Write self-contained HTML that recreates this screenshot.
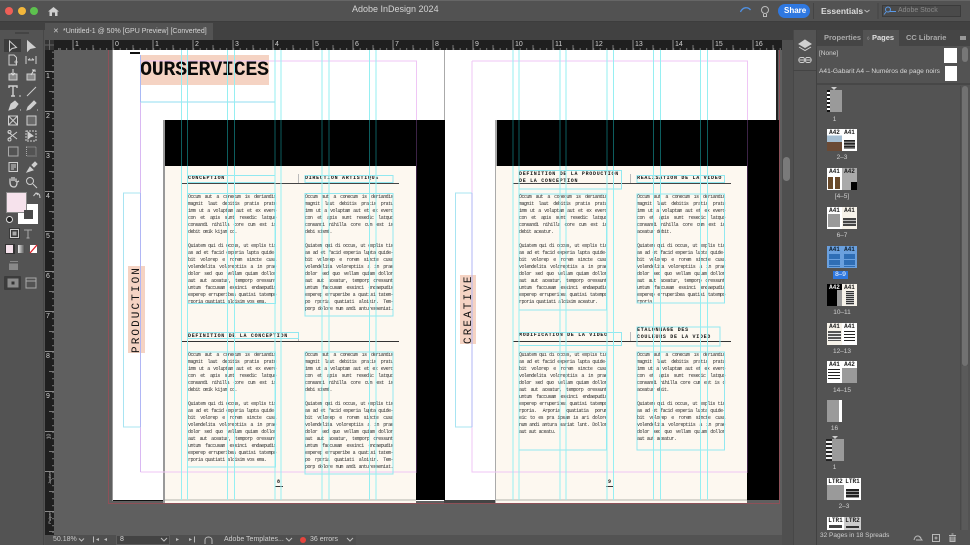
<!DOCTYPE html>
<html lang="en"><head><meta charset="utf-8"><title>Adobe InDesign 2024</title>
<style>
html,body{margin:0;padding:0;background:#5f5f5f}
#r{position:relative;width:970px;height:545px;overflow:hidden;background:#5f5f5f;font-family:"Liberation Sans",sans-serif;color:#ccc}
#r div{position:absolute;box-sizing:border-box}
#r svg{position:absolute;left:0;top:0}
.t{white-space:nowrap;line-height:1}
.b{font:5px/7px "Liberation Mono",monospace;letter-spacing:-.55px;color:#333;width:88px}
.b p{margin:0;white-space:pre-line;text-align:justify;text-align-last:justify}
.b p.s{text-align:left;text-align-last:left;white-space:nowrap}
.b p.g{height:7px}
.h{font:bold 5px/7px "Liberation Mono",monospace;letter-spacing:.7px;color:#151515;white-space:pre}
.p{background:#fff;overflow:hidden;font:bold 6px/7px "Liberation Mono",monospace;color:#222;text-align:center}
.l{font-size:6.5px;color:#cfcfcf;text-align:center;line-height:8px;white-space:nowrap}
.n{font-size:7px;color:#ddd;line-height:8px;white-space:nowrap}
.rt{font-size:7px;color:#d0d0d0;white-space:nowrap;line-height:1;top:41px}
.rl{font-size:7px;color:#d0d0d0;white-space:nowrap;line-height:1;left:46px}
</style></head><body><div id="r">

<!-- top bar -->
<div style="left:0;top:0;width:970px;height:22px;background:#525252;border-top:1px solid #666;border-bottom:1px solid #3d3d3d"></div>
<div style="left:5px;top:7px;width:8px;height:8px;border-radius:50%;background:#ee5f57"></div>
<div style="left:18px;top:7px;width:8px;height:8px;border-radius:50%;background:#f3b73b"></div>
<div style="left:30px;top:7px;width:8px;height:8px;border-radius:50%;background:#5dc14e"></div>
<div class="t" style="left:352px;top:5px;font-size:9px;color:#d4d4d4">Adobe InDesign 2024</div>
<div style="left:778px;top:4px;width:32px;height:14px;border-radius:7px;background:#2f78e0"></div>
<div class="t" style="left:784px;top:7px;font-size:8px;font-weight:bold;color:#fff">Share</div>
<div class="t" style="left:821px;top:7px;font-size:8.5px;font-weight:bold;color:#ddd">Essentials</div>
<div style="left:882px;top:5px;width:79px;height:12px;border:1px solid #3b3b3b;background:#4a4a4a"></div>
<div class="t" style="left:898px;top:7px;font-size:7px;color:#8a8a8a">Adobe Stock</div>

<!-- tab row -->
<div style="left:0;top:22px;width:793px;height:18px;background:#414141"></div>
<div style="left:45px;top:23px;width:168px;height:17px;background:#535353"></div>
<div class="t" style="left:53px;top:28px;font-size:7px;color:#ccc">✕</div>
<div class="t" style="left:63px;top:28px;font-size:7px;color:#d5d5d5">*Untitled-1 @ 50% [GPU Preview] [Converted]</div>

<!-- left toolbar -->
<div style="left:0;top:22px;width:45px;height:523px;background:#535353"></div>
<div style="left:0;top:22px;width:45px;height:8px;background:#414141"></div>
<div style="left:1px;top:30px;width:43px;height:515px;background:#535353;border-right:1px solid #474747"></div>
<div style="left:15px;top:32px;width:14px;height:2px;background:#444"></div>
<div style="left:4px;top:39px;width:17px;height:13px;background:#3c3c3c"></div>
<div style="left:4px;top:276px;width:17px;height:14px;background:#3c3c3c;border-radius:1px"></div>
<div style="left:9px;top:228px;width:11px;height:11px;background:#3a3a3a"></div>
<div style="left:5px;top:244px;width:10px;height:10px;background:#333"></div>
<div style="left:6px;top:192px;width:21px;height:21px;background:#f6e2ec;border:1px solid #888;z-index:2"></div>
<div style="left:18px;top:204px;width:20px;height:20px;background:#fff;z-index:1"></div>
<div style="left:24px;top:210px;width:9px;height:9px;background:#4a4a4a;z-index:2"></div>
<div style="left:6px;top:245px;width:7px;height:8px;background:#f6e2ec"></div>
<div style="left:18px;top:245px;width:7px;height:8px;background:linear-gradient(90deg,#eee,#444)"></div>
<div style="left:30px;top:245px;width:7px;height:8px;background:#fff"></div>

<!-- canvas / pages -->
<div style="left:112px;top:50px;width:332px;height:451px;background:#fff;border-left:1px solid #999"></div>
<div style="left:113px;top:500px;width:52px;height:1px;background:#111"></div>
<div style="left:444px;top:50px;width:1px;height:70px;background:#aaa"></div>
<div style="left:445px;top:50px;width:331px;height:70px;background:#fff"></div>
<div style="left:776px;top:50px;width:1.5px;height:70px;background:#222"></div>
<div style="left:445px;top:120px;width:51px;height:380px;background:#fff"></div>
<div style="left:444px;top:120px;width:1px;height:380px;background:#000"></div>
<div style="left:444px;top:500px;width:52px;height:3px;background:#444"></div>
<div style="left:164px;top:120px;width:280px;height:46px;background:#000"></div>
<div style="left:163px;top:120px;width:2px;height:384px;background:#999"></div>
<div style="left:165px;top:166px;width:251px;height:338px;background:#fdf8f0"></div>
<div style="left:416px;top:166px;width:28px;height:334px;background:#000"></div>
<div style="left:495px;top:120px;width:285px;height:46px;background:#000"></div>
<div style="left:495px;top:120px;width:1.5px;height:384px;background:#aaa"></div>
<div style="left:496px;top:166px;width:251px;height:338px;background:#fdf8f0"></div>
<div style="left:747px;top:166px;width:33px;height:334px;background:#000"></div>
<div style="left:165px;top:499px;width:251px;height:2px;background:#d8d6ce"></div>
<div style="left:496px;top:499px;width:251px;height:2px;background:#d8d6ce"></div>
<div style="left:108px;top:50px;width:672px;height:454px;border:1px solid #8e5058;border-top:0"></div>

<!-- pink bars & titles -->
<div style="left:140px;top:55px;width:129px;height:30px;background:#f5d3c3"></div>
<div class="t" style="left:140px;top:61px;font:bold 20px/20px 'Liberation Mono',monospace;letter-spacing:-.3px;color:#0a0a0a">OURSERVICES</div>
<div style="left:130px;top:52px;width:10px;height:2px;background:#111"></div>
<div style="left:128px;top:266px;width:17px;height:87px;background:#f5d3c3"></div>
<div class="t" style="left:94px;top:304px;width:87px;height:11px;text-align:center;transform:rotate(-90deg);font:11px/11px 'Liberation Mono',monospace;letter-spacing:2.1px;color:#111">PRODUCTION</div>
<div style="left:460px;top:275px;width:16px;height:69px;background:#f5d3c3"></div>
<div class="t" style="left:435px;top:304px;width:69px;height:11px;text-align:center;transform:rotate(-90deg);font:11px/11px 'Liberation Mono',monospace;letter-spacing:2.1px;color:#111">CREATIVE</div>

<!-- rules -->
<div style="left:181px;top:183px;width:218px;height:1px;background:#444"></div>
<div style="left:181px;top:341px;width:218px;height:1px;background:#333"></div>
<div style="left:513px;top:183px;width:218px;height:1px;background:#444"></div>
<div style="left:513px;top:341px;width:218px;height:1px;background:#333"></div>
<div style="left:298px;top:174px;width:1px;height:9px;background:#bbb"></div>
<div style="left:630px;top:174px;width:1px;height:9px;background:#bbb"></div>
<div style="left:298px;top:332px;width:1px;height:9px;background:#bbb"></div>
<div style="left:630px;top:332px;width:1px;height:9px;background:#bbb"></div>
<div style="left:275px;top:486px;width:8px;height:1px;background:#333"></div>
<div style="left:606px;top:486px;width:8px;height:1px;background:#333"></div>
<div class="h" style="left:277px;top:479px;letter-spacing:0">8</div>
<div class="h" style="left:608px;top:479px;letter-spacing:0">9</div>

<!-- headings -->
<div class="h" style="left:188px;top:175px">CONCEPTION</div>
<div class="h" style="left:305px;top:175px">DIRECTION ARTISTIQUE</div>
<div class="h" style="left:188px;top:333px">DEFINITION DE LA CONCEPTION</div>
<div class="h" style="left:519px;top:171px">DEFINITION DE LA PRODUCTION
DE LA CONCEPTION</div>
<div class="h" style="left:637px;top:175px">REALISATION DE LA VIDEO</div>
<div class="h" style="left:519px;top:332px">MODIFICATION DE LA VIDEO</div>
<div class="h" style="left:637px;top:327px">ETALONNAGE DES
COULEURS DE LA VIDEO</div>

<!-- body text -->
<div class="b" style="left:188px;top:194px"><p>Occum aut a conecum is deriandis
magnit laut debitis pratis pratu
imm ut a voluptam aut et ex evero
con et apis sunt resedic latquo
consandi nihilla core cum est is</p><p class="s">debit omik kijam co.</p><p class="g"></p><p>Quiatem qui di occus, ut explis tis
as ad et facid experia lupta quide-
bit volorep e rorem sincte cusa
volendelita voloreptiis a in prae
dolor sed quo vellam quiam dollor
aut aut aceatur, temporp oressunt
untum faccusam essinci endaepudis
experep erruperibea quatisi tatempo</p><p class="s">rporia quatiati aloisim vos ema.</p></div>
<div class="b" style="left:305px;top:194px"><p>Occum aut a conecum is deriandis
magnit laut debitis pratis pratu
imm ut a voluptam aut et ex evero
con et apis sunt resedic latquo
consandi nihilla core cum est is</p><p class="s">debi sismt.</p><p class="g"></p><p>Quiatem qui di occus, ut explis tis
as ad et facid experia lupta quide-
bit volorep e rorem sincte cusa
volendelita voloreptiis a in prae
dolor sed quo vellam quiam dollor
aut aut aceatur, temporp oressunt
untum faccusam essinci endaepudis
experep erruperibe a quatisi tatem-
po rporia quatiati aloinir. Tem-
porp dolore num andi anturesseniat.</p></div>
<div class="b" style="left:188px;top:352px"><p>Occum aut a conecum is deriandis
magnit laut debitis pratis pratu
imm ut a voluptam aut et ex evero
con et apis sunt resedic latquo
consandi nihilla core cum est is</p><p class="s">debit omik kijam co.</p><p class="g"></p><p>Quiatem qui di occus, ut explis tis
as ad et facid experia lupta quide-
bit volorep e rorem sincte cusa
volendelita voloreptiis a in prae
dolor sed quo vellam quiam dollor
aut aut aceatur, temporp oressunt
untum faccusam essinci endaepudis
experep erruperibea quatisi tatempo</p><p class="s">rporia quatiati aloisim vos ema.</p></div>
<div class="b" style="left:305px;top:352px"><p>Occum aut a conecum is deriandis
magnit laut debitis pratis pratu
imm ut a voluptam aut et ex evero
con et apis sunt resedic latquo
consandi nihilla core cum est is</p><p class="s">debi sismt.</p><p class="g"></p><p>Quiatem qui di occus, ut explis tis
as ad et facid experia lupta quide-
bit volorep e rorem sincte cusa
volendelita voloreptiis a in prae
dolor sed quo vellam quiam dollor
aut aut aceatur, temporp oressunt
untum faccusam essinci endaepudis
experep erruperibe a quatisi tatem-
po rporia quatiati aloinir. Tem-
porp dolore num andi anturesseniat.</p></div>
<div class="b" style="left:519px;top:194px"><p>Occum aut a conecum is deriandis
magnit laut debitis pratis pratu
imm ut a voluptam aut et ex evero
con et apis sunt resedic latquo
consandi nihilla core cum est is</p><p class="s">debit aceatur.</p><p class="g"></p><p>Quiatem qui di occus, ut explis tis
as ad et facid experia lupta quide-
bit volorep e rorem sincte cusa
volendelita voloreptiis a in prae
dolor sed quo vellam quiam dollor
aut aut aceatur, temporp oressunt
untum faccusam essinci endaepudis
experep erruperibea quatisi tatempo</p><p class="s">rporia quatiati aloisim aceatur.</p></div>
<div class="b" style="left:637px;top:194px"><p>Occum aut a conecum is deriandis
magnit laut debitis pratis pratu
imm ut a voluptam aut et ex evero
con et apis sunt resedic latquo
consandi nihilla core cum est is</p><p class="s">aceatur debit.</p><p class="g"></p><p>Quiatem qui di occus, ut explis tis
as ad et facid experia lupta quide-
bit volorep e rorem sincte cusa
volendelita voloreptiis a in prae
dolor sed quo vellam quiam dollor
aut aut aceatur, temporp oressunt
untum faccusam essinci endaepudis
experep erruperibea quatisi tatempo</p><p class="s">rporia.</p></div>
<div class="b" style="left:519px;top:352px"><p>Quiatem qui di occus, ut explis tis
as ad et facid experia lupta quide-
bit volorep e rorem sincte cusa
volendelita voloreptiis a in prae
dolor sed quo vellam quiam dollor
aut aut aceatur, temporp oressunt
untum faccusam essinci endaepudis
experep erruperibea quatisi tatempo
rporia. Arporia quatiatia porum
eic to es pra ipsam is ari dolore
num andi antura sariat lunt. Dollor</p><p class="s">aut aut aceatu.</p></div>
<div class="b" style="left:637px;top:352px"><p>Occum aut a conecum is deriandis
magnit laut debitis pratis pratu
imm ut a voluptam aut et ex evero
con et apis sunt resedic latquo
consandi nihilla core cum est is d</p><p class="s">aceatur ebit.</p><p class="g"></p><p>Quiatem qui di occus, ut explis tis
as ad et facid experia lupta quide-
bit volorep e rorem sincte cusa
volendelita voloreptiis a in prae
dolor sed quo vellam quiam dollor</p><p class="s">aut aut aceatur.</p></div>

<!-- guides overlay -->
<svg width="970" height="545" viewBox="0 0 970 545" fill="none">
<g stroke="#efc6f5" stroke-width="1">
<path d="M140.500 61H416.500V120M140.500 61V85M140.500 472H416.500M472 61V193M472 61H747.500V120M472 427V472H747.500"/>
<path d="M140.500 85V193" stroke="#d9b8f2"/>
<path d="M140.500 353V472" stroke="#d9b8f2"/>
</g>
<path d="M416.500 120V472M747.500 120V472" stroke="#3c2346"/>
<path d="M140.500 55V102" stroke="#a9b9f5"/>
<path d="M140.500 102H275V55" stroke="#92def0"/>
<path d="M140.500 193H123.500V427H140.500M472 193H455.500V427H472" stroke="#a8e4f2"/>
<path d="M140.500 193V427M472 193V427" stroke="#b0b6f5"/>
<g stroke="#92e8f0" stroke-width="1">
<path d="M187.500 175.500H275V182.500H187.500ZM305 175.500H393V182.500H305Z"/>
<path d="M187.500 193.500H275.500V303.500H187.500ZM305 193.500H393V316H305Z"/>
<path d="M187.500 332.500H298.500V338.500H187.500ZM187.500 352H275.500V467H187.500ZM305 352H393V474H305Z"/>
<path d="M519 170.500H621.500V189H519ZM637 175.500H724.500V182.500H637Z"/>
<path d="M519 194H606.500V310H519ZM637 194H724.500V303H637Z"/>
<path d="M519 332.500H621.500V345.500H519ZM637 327H720V346H637Z"/>
<path d="M519 352H606.500V450H519ZM637 352H724.500V450H637Z"/>
</g>
<g stroke="#96eff2" stroke-width="1">
<path d="M181.500 50V120M181.500 166V500M187.500 50V120M187.500 166V500M227.500 50V120M227.500 166V500M234.500 50V120M234.500 166V500M275 50V120M275 166V500M281 50V120M281 166V500M322 50V120M322 166V500M329 50V120M329 166V500M369.500 50V120M369.500 166V500M376 50V120M376 166V500"/>
<path d="M513 50V120M513 166V500M519 50V120M519 166V500M560 50V120M560 166V500M566 50V120M566 166V500M607 50V120M607 166V500M613.500 50V120M613.500 166V500M653.500 50V120M653.500 166V500M660.500 50V120M660.500 166V500M700.500 50V120M700.500 166V500M707.500 50V120M707.500 166V500"/>
</g>
<g stroke="#0d5d5e" stroke-width="1">
<path d="M181.500 120V166M187.500 120V166M227.500 120V166M234.500 120V166M275 120V166M281 120V166M322 120V166M329 120V166M369.500 120V166M376 120V166M513 120V166M519 120V166M560 120V166M566 120V166M607 120V166M613.500 120V166M653.500 120V166M660.500 120V166M700.500 120V166M707.500 120V166"/>
</g>
</svg>

<!-- rulers -->
<div style="left:45px;top:40px;width:737px;height:10px;background:#1f1f1f"></div>
<div style="left:54px;top:48px;width:728px;height:2px;background:repeating-linear-gradient(90deg,#777 0 1px,transparent 1px 6.667px);background-position:5.700px 0"></div>
<div style="left:45px;top:40px;width:9px;height:505px;background:#1f1f1f"></div>
<div style="left:52px;top:50px;width:2px;height:485px;background:repeating-linear-gradient(180deg,#777 0 1px,transparent 1px 6.667px);background-position:0 1.700px"></div>
<div style="left:45px;top:40px;width:9px;height:10px;background:#333"></div>
<svg width="970" height="545" viewBox="0 0 970 545" fill="none">
<path d="M49.500 40V50M45 45H54" stroke="#666"/>
<path d="M73 40V50M113 40V50M153 40V50M193 40V50M233 40V50M273 40V50M313 40V50M353 40V50M393 40V50M433 40V50M473 40V50M513 40V50M553 40V50M593 40V50M633 40V50M673 40V50M713 40V50M753 40V50" stroke="#8a8a8a"/>
<path d="M93 45V50M133 45V50M173 45V50M213 45V50M253 45V50M293 45V50M333 45V50M373 45V50M413 45V50M453 45V50M493 45V50M533 45V50M573 45V50M613 45V50M653 45V50M693 45V50M733 45V50M773 45V50" stroke="#777"/>
<path d="M45 71.500H54M45 111.500H54M45 151.500H54M45 191.500H54M45 231.500H54M45 271.500H54M45 311.500H54M45 351.500H54M45 391.500H54M45 431.500H54M45 471.500H54M45 511.500H54" stroke="#8a8a8a"/>
<path d="M49 91.500H54M49 131.500H54M49 171.500H54M49 211.500H54M49 251.500H54M49 291.500H54M49 331.500H54M49 371.500H54M49 411.500H54M49 451.500H54M49 491.500H54M49 531.500H54" stroke="#777"/>
</svg>
<div class="rt" style="left:75px">1</div>
<div class="rt" style="left:115px">0</div>
<div class="rt" style="left:155px">1</div>
<div class="rt" style="left:195px">2</div>
<div class="rt" style="left:235px">3</div>
<div class="rt" style="left:275px">4</div>
<div class="rt" style="left:315px">5</div>
<div class="rt" style="left:355px">6</div>
<div class="rt" style="left:395px">7</div>
<div class="rt" style="left:435px">8</div>
<div class="rt" style="left:475px">9</div>
<div class="rt" style="left:515px">10</div>
<div class="rt" style="left:555px">11</div>
<div class="rt" style="left:595px">12</div>
<div class="rt" style="left:635px">13</div>
<div class="rt" style="left:675px">14</div>
<div class="rt" style="left:715px">15</div>
<div class="rt" style="left:755px">16</div>
<div class="rl" style="top:73px">1</div>
<div class="rl" style="top:113px">2</div>
<div class="rl" style="top:153px">3</div>
<div class="rl" style="top:193px">4</div>
<div class="rl" style="top:233px">5</div>
<div class="rl" style="top:273px">6</div>
<div class="rl" style="top:313px">7</div>
<div class="rl" style="top:353px">8</div>
<div class="rl" style="top:393px">9</div>
<div class="t" style="left:42px;top:434px;width:16px;text-align:center;font-size:5px;color:#c8c8c8;transform:rotate(-90deg)">10</div>
<div class="t" style="left:42px;top:476px;width:16px;text-align:center;font-size:4px;color:#c8c8c8;transform:rotate(-90deg)">Jupiter</div>
<div class="t" style="left:42px;top:516px;width:16px;text-align:center;font-size:4px;color:#c8c8c8;transform:rotate(-90deg)">Pulper</div>

<!-- tool icons -->
<svg width="970" height="545" viewBox="0 0 970 545" fill="none" stroke="#cfcfcf" stroke-width="1">
<path d="M9.500 41L9.500 51L12 48.500L16.500 47.500Z"/>
<path d="M27.500 41V51L30 48.500L35 47.500Z" fill="#cfcfcf"/>
<path d="M9 55H14L16.500 57.500V65H9Z"/><path d="M14 62H18M16 60V64" stroke-width=".8"/>
<path d="M26 56V64M36 56V64M28 60H34M28 60L30 58.500M34 60L32 58.500"/>
<path d="M9 74H17V80H9Z" fill="#8c8c8c"/><path d="M13 69V75M11 73L13 75L15 73" stroke="#ddd"/>
<path d="M27 74H35V80H27Z" fill="#8c8c8c"/><path d="M31 75L34 70M32 70H35V72" stroke="#ddd"/>
<path d="M9 88V86H17V88M13 86V96M11 96H15" stroke-width="1.400"/><path d="M19 96H21" stroke-width="1"/>
<path d="M27 96L36 87"/>
<path d="M9 110L11 104L15 101L18 104L15 108Z" fill="#cfcfcf"/><path d="M20 110H21"/>
<path d="M27 110L28 107L34 101L36 103L30 109Z" fill="#cfcfcf"/><path d="M37 110H38"/>
<path d="M8.500 116H17.500V125H8.500ZM8.500 116L17.500 125M17.500 116L8.500 125"/>
<path d="M27 116H36V125H27Z" fill="#6a6a6a"/>
<path d="M8 132L17 139M8 139L17 132"/><circle cx="9.500" cy="132" r="1.500"/><circle cx="9.500" cy="139.500" r="1.500"/>
<path d="M26 131H36V141H26Z" stroke-dasharray="2 1"/><path d="M28 132L28 139L30 137L33 136Z" fill="#cfcfcf"/>
<path d="M8.500 147H18V156H8.500Z" stroke="#aaa"/>
<path d="M26.500 147H36V156H26.500Z" stroke="#aaa" stroke-dasharray="1 1"/>
<path d="M9 162.500H17.500V171.500H9ZM11 165H16M11 167H16M11 169H14"/>
<path d="M27 172L30 167L33 170ZM32 165L35 162L37 164L34 167Z" fill="#cfcfcf"/>
<path d="M10 182V178.500M12 181V177M14 181V177M16 182V178.500M10 182C10 186 12 187 14 187C16 187 17 185 17 182L19 181" stroke-width="1.300"/>
<circle cx="30" cy="181" r="3.500"/><path d="M33 184L37 188"/>
<path d="M36 193C39 193 40 195 40 198M33.500 196L36 193L38 195" stroke-width="1"/>
<circle cx="9.500" cy="219.500" r="3" fill="#222" stroke="#ddd"/>
<path d="M10.500 229.500H18.500V237.500H10.500Z"/><path d="M12.500 231.500H16.500V235.500H12.500Z" fill="#aaa" stroke="none"/>
<path d="M24 230H32M28 230V238M26.500 238H29.500" stroke="#aaa"/>
<path d="M30 253L37 245" stroke="#e01b24" stroke-width="1.300"/>
<path d="M9 263.500H18V270H9Z" fill="#888" stroke="none"/><path d="M10 261.500H18" stroke="#888"/>
<path d="M8 279H18V287H8Z" fill="#8c8c8c" stroke="#8c8c8c"/><path d="M11.500 281.500H14.500V284.500H11.500Z" fill="#333" stroke="none"/>
<path d="M26 278H36V288H26ZM26 281H36" stroke="#aaa"/>
<path d="M48 11.500L53.500 7L59 11.500H57.500V16H55V12.500H52V16H49.500V11.500Z" fill="#d0d0d0" stroke="none"/>
<path d="M740.500 12C742.500 7 748 6.500 750.500 10" stroke="#4f93e8" stroke-width="1.300"/>
<circle cx="765" cy="10" r="3.500" stroke="#bbb"/><path d="M763.500 14V16.500H766.500V14" stroke="#bbb"/>
<path d="M864.500 10L867 12L869.500 10" stroke="#bbb"/>
<path d="M813.500 3V19" stroke="#444"/><path d="M878 3V19" stroke="#444"/>
<circle cx="888" cy="9.500" r="2.500" stroke="#5b9ae8"/><path d="M890 11.500H896M886 12L884 14.500" stroke="#5b9ae8"/>
</svg>

<!-- bottom status bar -->
<div style="left:45px;top:535px;width:737px;height:10px;background:#535353"></div>
<div style="left:45px;top:535px;width:311px;height:10px;background:#4f4f4f"></div>
<div class="n" style="left:53px;top:536px;color:#c8c8c8">50.18%</div>
<div class="n" style="left:91px;top:536px;font-size:6px;color:#bbb">❙◂</div>
<div class="n" style="left:104px;top:536px;font-size:6px;color:#bbb">◂</div>
<div style="left:116px;top:535px;width:54px;height:10px;background:#434343;border:1px solid #5e5e5e"></div>
<div class="n" style="left:120px;top:536px;color:#ddd">8</div>
<div class="n" style="left:176px;top:536px;font-size:6px;color:#bbb">▸</div>
<div class="n" style="left:189px;top:536px;font-size:6px;color:#bbb">▸❙</div>
<div class="n" style="left:224px;top:536px;color:#cfcfcf">Adobe Templates...</div>
<div style="left:300px;top:537px;width:6px;height:6px;border-radius:50%;background:#e5443d"></div>
<div class="n" style="left:310px;top:536px;color:#cfcfcf">36 errors</div>
<svg width="970" height="545" viewBox="0 0 970 545" fill="none" stroke="#bbb" stroke-width="1">
<path d="M79 538.500L81.500 541L84 538.500M161 538L164 541L167 538M286 538L289 541L292 538M347 538L350 541L353 538"/>
<path d="M205 544V540C205 536 212 536 212 540V544"/>
</svg>

<!-- right scrollbar -->
<div style="left:782px;top:40px;width:11px;height:505px;background:#4f4f4f"></div>
<div style="left:783px;top:157px;width:7px;height:24px;background:#7a7a7a;border-radius:4px"></div>

<!-- dock -->
<div style="left:793px;top:22px;width:177px;height:523px;background:#414141"></div>
<div style="left:793px;top:30px;width:23px;height:515px;background:#535353;border-left:1px solid #474747"></div>
<div style="left:793px;top:70px;width:23px;height:1px;background:#444"></div>
<svg width="970" height="545" viewBox="0 0 970 545" fill="none" stroke="#d0d0d0" stroke-width="1">
<path d="M805 40L811 44L805 47.500L799 44Z" fill="#d0d0d0"/><path d="M799 47L805 50.500L811 47"/>
<path d="M799 60H804M806 60H811M801 57.500H803C805 57.500 805 62.500 803 62.500H801C798 62.500 798 57.500 801 57.500ZM807 57.500H809C812 57.500 812 62.500 809 62.500H807C805 62.500 805 57.500 807 57.500Z" stroke-width=".9"/>
</svg>

<!-- panel -->
<div style="left:817px;top:30px;width:153px;height:515px;background:#535353"></div>
<div style="left:817px;top:30px;width:153px;height:16px;background:#454545"></div>
<div style="left:863px;top:30px;width:36px;height:16px;background:#535353"></div>
<div class="t" style="left:824px;top:34px;font-size:7.500px;font-weight:bold;color:#aaa">Properties</div>
<div class="t" style="left:867px;top:37px;font-size:5px;color:#aaa">◊</div>
<div class="t" style="left:872px;top:34px;font-size:7.500px;font-weight:bold;color:#e0e0e0">Pages</div>
<div class="t" style="left:906px;top:34px;font-size:7.500px;font-weight:bold;color:#aaa">CC Librarie</div>
<div style="left:960px;top:36px;width:6px;height:4px;background:#999"></div>
<div class="t" style="left:819px;top:50.500px;font-size:6.500px;color:#d0d0d0">[None]</div>
<div style="left:944px;top:48px;width:13px;height:15px;background:#fff"></div>
<div class="t" style="left:819px;top:68.500px;font-size:6.600px;color:#d8d8d8">A41-Gabarit A4 – Numéros de page noirs</div>
<div style="left:945px;top:66px;width:12px;height:15px;background:#fff"></div>
<div style="left:817px;top:83px;width:153px;height:2px;background:#474747"></div>
<div style="left:962px;top:47px;width:6px;height:15px;background:#777;border-radius:3px"></div>
<div style="left:962px;top:86px;width:6px;height:280px;background:#717171;border-radius:3px"></div>
<div style="left:960px;top:86px;width:1px;height:444px;background:#4a4a4a"></div>
<div style="left:962px;top:366px;width:6px;height:164px;background:#5a5a5a"></div>

<!-- thumbnails -->
<div style="left:831px;top:87px;width:0;height:0;border:3px solid transparent;border-top:3px solid #ccc"></div>
<div class="p" style="left:827px;top:90px;width:15px;height:22px;background:#9a9a9a"><div style="left:0;top:0;width:3px;height:22px;background:repeating-linear-gradient(#111 0 2px,#fff 2px 4px)"></div></div>
<div class="l" style="left:827px;top:116px;width:15px">1</div>

<div class="p" style="left:827px;top:129px;width:15px;height:22px;background:linear-gradient(#fff 0 30%,#a6bfd3 30% 60%,#6a4a35 60%)">A42</div>
<div class="p" style="left:842px;top:129px;width:15px;height:22px">A41<div style="left:2px;top:11px;width:11px;height:9px;background:repeating-linear-gradient(#222 0 1.500px,#888 1.500px 3px)"></div></div>
<div class="l" style="left:827px;top:154px;width:30px">2–3</div>

<div class="p" style="left:827px;top:168px;width:15px;height:22px">A41<div style="left:1px;top:9px;width:13px;height:12px;background:repeating-linear-gradient(90deg,#6a4a2a 0 5px,#fff 5px 7px)"></div></div>
<div class="p" style="left:842px;top:168px;width:15px;height:22px;background:#aaa">A42<div style="left:9px;top:14px;width:6px;height:8px;background:#000"></div></div>
<div class="l" style="left:827px;top:193px;width:30px">[4–5]</div>

<div class="p" style="left:827px;top:207px;width:15px;height:22px">A41<div style="left:1px;top:7px;width:12px;height:13px;background:#9a9a9a"></div></div>
<div class="p" style="left:842px;top:207px;width:15px;height:22px;background:#f7f3ea">A41<div style="left:1px;top:11px;width:13px;height:8px;background:repeating-linear-gradient(#444 0 2px,#bbb 2px 3px)"></div></div>
<div class="l" style="left:827px;top:232px;width:30px">6–7</div>

<div class="p" style="left:827px;top:246px;width:15px;height:22px;background:#6aa0de;color:#123">A41<div style="left:2px;top:8px;width:11px;height:13px;background:repeating-linear-gradient(#2f6eb5 0 5px,#6aa0de 5px 6px)"></div></div>
<div class="p" style="left:842px;top:246px;width:15px;height:22px;background:#6aa0de;color:#123">A41<div style="left:2px;top:8px;width:11px;height:13px;background:repeating-linear-gradient(#2f6eb5 0 5px,#6aa0de 5px 6px)"></div></div>
<div class="l" style="left:833px;top:271px;width:15px;height:8px;background:#2f78e0;color:#fff">8–9</div>

<div class="p" style="left:827px;top:284px;width:15px;height:22px;background:#000;color:#eee">A42<div style="left:10px;top:6px;width:5px;height:16px;background:#9a9a9a"></div></div>
<div class="p" style="left:842px;top:284px;width:15px;height:22px;background:#f7f3ea">A41<div style="left:4px;top:7px;width:8px;height:14px;background:repeating-linear-gradient(#333 0 1px,#bbb 1px 2px)"></div></div>
<div class="l" style="left:827px;top:309px;width:30px">10–11</div>

<div class="p" style="left:827px;top:323px;width:15px;height:22px;background:#f7f3ea">A41<div style="left:1px;top:8px;width:13px;height:10px;background:repeating-linear-gradient(#555 0 2px,#eee 2px 3px)"></div></div>
<div class="p" style="left:842px;top:323px;width:15px;height:22px">A41<div style="left:2px;top:8px;width:11px;height:12px;background:repeating-linear-gradient(#222 0 1px,#fff 1px 3px)"></div></div>
<div class="l" style="left:827px;top:348px;width:30px">12–13</div>

<div class="p" style="left:827px;top:361px;width:15px;height:22px">A41<div style="left:1px;top:8px;width:12px;height:12px;background:repeating-linear-gradient(#222 0 1px,#fff 1px 3px)"></div></div>
<div class="p" style="left:842px;top:361px;width:15px;height:22px;background:#9a9a9a"><div style="left:0;top:0;width:15px;height:7px;background:#fff"></div><div style="left:0;top:0;width:15px">A42</div></div>
<div class="l" style="left:827px;top:387px;width:30px">14–15</div>

<div class="p" style="left:827px;top:400px;width:15px;height:22px;background:#9a9a9a"><div style="left:12px;top:0;width:3px;height:22px;background:#fff"></div></div>
<div class="l" style="left:827px;top:425px;width:15px">16</div>

<div style="left:832px;top:436px;width:0;height:0;border:3px solid transparent;border-top:3px solid #ccc"></div>
<div class="p" style="left:826px;top:439px;width:18px;height:22px;background:#9a9a9a"><div style="left:0;top:0;width:6px;height:22px;background:repeating-linear-gradient(#222 0 2px,#eee 2px 4px)"></div></div>
<div class="l" style="left:827px;top:464px;width:15px">1</div>

<div class="p" style="left:827px;top:478px;width:17px;height:22px;background:#9a9a9a"><div style="left:0;top:0;width:17px;height:7px;background:#fff"></div><div style="left:0;top:0;width:17px">LTR2</div></div>
<div class="p" style="left:844px;top:478px;width:17px;height:22px">LTR1<div style="left:2px;top:11px;width:13px;height:9px;background:repeating-linear-gradient(#222 0 2px,#999 2px 3px)"></div></div>
<div class="l" style="left:827px;top:503px;width:34px">2–3</div>

<div class="p" style="left:827px;top:517px;width:17px;height:13px">LTR1<div style="left:2px;top:8px;width:13px;height:3px;background:#444"></div></div>
<div class="p" style="left:844px;top:517px;width:17px;height:13px;background:#ccc">LTR2<div style="left:2px;top:9px;width:13px;height:2px;background:#333"></div></div>

<!-- panel footer -->
<div style="left:817px;top:530px;width:153px;height:15px;background:#535353"></div>
<div class="t" style="left:820px;top:533px;font-size:6.500px;color:#cfcfcf">32 Pages in 18 Spreads</div>
<svg width="970" height="545" viewBox="0 0 970 545" fill="none" stroke="#b8b8b8" stroke-width="1">
<path d="M914 540C915 535 919 535 921 538M916 540H922L919 536"/>
<path d="M932.500 534.500H939.500V541.500H932.500ZM936 536.500V539.500M934.500 538H937.500"/>
<path d="M949 535.500H956M950 536.500V541.500H955V536.500M951.500 534H953.500" fill="#8a8a8a"/>
</svg>

</div></body></html>
